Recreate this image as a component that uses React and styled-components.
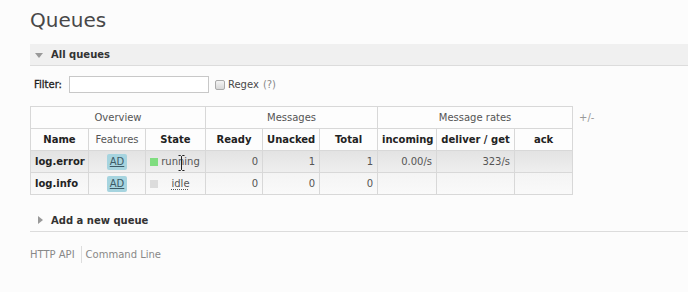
import React from 'react'
import styled, { createGlobalStyle } from 'styled-components'

const GlobalStyle = createGlobalStyle`
  body {
    margin: 0;
    background: #fcfcfc;
    font-family: "DejaVu Sans", Verdana, sans-serif;
    font-size: 10px;
    color: #484848;
  }
`

const queues = [
  { name: 'log.error', state: 'running', ready: 0, unacked: 1, total: 1, incoming: '0.00/s', deliver: '323/s', ack: '', alt: true },
  { name: 'log.info', state: 'idle', ready: 0, unacked: 0, total: 0, incoming: '', deliver: '', ack: '', alt: false },
]

const widths = [58, 57, 60, 57, 57, 58, 59, 78, 58]

const App = () => (
  <>
    <GlobalStyle />
    <Page>
      <Title>Queues</Title>
      <SectionHeader open>
        <Arrow open />
        All queues
      </SectionHeader>
      <FilterRow>
        <Label>Filter:</Label>
        <FilterInput />
        <Check />
        <span>Regex</span>
        <Help>(?)</Help>
      </FilterRow>
      <TableRow>
        <Table>
          <colgroup>
            {widths.map((w, i) => (
              <col key={i} style={{ width: w }} />
            ))}
          </colgroup>
          <thead>
            <tr>
              <GroupTh colSpan={3}>Overview</GroupTh>
              <GroupTh colSpan={3}>Messages</GroupTh>
              <GroupTh colSpan={3}>Message rates</GroupTh>
            </tr>
            <tr>
              <Th>Name</Th>
              <Th light>Features</Th>
              <Th>State</Th>
              <Th>Ready</Th>
              <Th>Unacked</Th>
              <Th>Total</Th>
              <Th>incoming</Th>
              <Th>deliver / get</Th>
              <Th>ack</Th>
            </tr>
          </thead>
          <tbody>
            {queues.map((q) => (
              <Row key={q.name} alt={q.alt}>
                <NameCell>{q.name}</NameCell>
                <CenterCell>
                  <Badge>AD</Badge>
                </CenterCell>
                <StateCell>
                  <StateBox>
                    <Square running={q.state === 'running'} />
                    <StateText underline={q.state === 'idle'}>{q.state}</StateText>
                  </StateBox>
                  {q.state === 'running' && (
                    <Cursor width="7" height="16" viewBox="0 0 7 16">
                      <path d="M0.5 0.5h2l1 1 1-1h2M3.5 1.5v13M0.5 15.5h2l1-1 1 1h2" fill="none" stroke="#222" strokeWidth="1" />
                    </Cursor>
                  )}
                </StateCell>
                <NumCell>{q.ready}</NumCell>
                <NumCell>{q.unacked}</NumCell>
                <NumCell>{q.total}</NumCell>
                <NumCell>{q.incoming}</NumCell>
                <NumCell>{q.deliver}</NumCell>
                <NumCell>{q.ack}</NumCell>
              </Row>
            ))}
          </tbody>
        </Table>
        <Toggle>+/-</Toggle>
      </TableRow>
      <SectionHeader>
        <Arrow />
        Add a new queue
      </SectionHeader>
      <Footer>
        <FooterLink>HTTP API</FooterLink>
        <FooterLink sep>Command Line</FooterLink>
      </Footer>
    </Page>
  </>
)

export default App

const Page = styled.div`
  padding: 8px 0 0 30px;
`

const Title = styled.h1`
  margin: 0;
  font-size: 20px;
  line-height: 24px;
  font-weight: normal;
  color: #484848;
`

const SectionHeader = styled.div`
  display: flex;
  align-items: center;
  height: 21px;
  margin-top: ${(p) => (p.open ? '12px' : '15px')};
  padding-left: 21px;
  position: relative;
  background: ${(p) => (p.open ? '#f0f0f0' : 'transparent')};
  border-bottom: 1px solid #dcdcdc;
  font-weight: bold;
  color: #333;
`

const Arrow = styled.span`
  position: absolute;
  left: ${(p) => (p.open ? '5px' : '8px')};
  top: ${(p) => (p.open ? '9px' : '6px')};
  width: 0;
  height: 0;
  border-style: solid;
  border-color: transparent;
  ${(p) =>
    p.open
      ? 'border-width: 5px 4px 0 4px; border-top-color: #999;'
      : 'border-width: 4px 0 4px 5px; border-left-color: #999;'}
`

const FilterRow = styled.div`
  display: flex;
  align-items: center;
  height: 17px;
  margin-top: 10px;
  padding-left: 4px;
  color: #484848;
`

const Label = styled.span`
  color: #222;
  -webkit-text-stroke: 0.3px #222;
  margin-right: 7px;
`

const FilterInput = styled.div`
  width: 138px;
  height: 15px;
  background: #fff;
  border: 1px solid #c8c8c8;
  margin-right: 6px;
`

const Check = styled.span`
  width: 8px;
  height: 8px;
  border: 1px solid #aaa;
  border-radius: 2px;
  background: linear-gradient(#f4f4f4, #d8d8d8);
  margin-right: 3px;
`

const Help = styled.span`
  color: #888;
  margin-left: 4px;
`

const TableRow = styled.div`
  display: flex;
  align-items: flex-start;
  margin-top: 13px;
`

const Table = styled.table`
  border-collapse: collapse;
  table-layout: fixed;
  width: 542px;
  background: #fdfdfd;
  td,
  th {
    border: 1px solid #d8d8d8;
    height: 21px;
    padding: 0 4px;
    vertical-align: middle;
  }
`

const GroupTh = styled.th`
  font-weight: normal;
  color: #555;
  text-align: center;
`

const Th = styled.th`
  font-weight: ${(p) => (p.light ? 'normal' : 'bold')};
  color: ${(p) => (p.light ? '#555' : '#222')};
  text-align: center;
`

const Row = styled.tr`
  background: ${(p) =>
    p.alt ? 'linear-gradient(#e3e3e3, #efefef)' : 'linear-gradient(#f4f4f4, #fafafa)'};
`

const NameCell = styled.td`
  font-weight: bold;
  color: #222;
  text-align: left;
`

const CenterCell = styled.td`
  text-align: center;
`

const Badge = styled.span`
  display: inline-block;
  padding: 1px 3px 2px;
  background: #a6d4df;
  color: #3c5a66;
  border-radius: 2px;
  line-height: 13px;
  text-decoration: underline;
`

const StateCell = styled.td`
  position: relative;
`

const StateBox = styled.div`
  display: flex;
  align-items: center;
  gap: 2px;
`

const Square = styled.span`
  width: 8px;
  height: 8px;
  flex-shrink: 0;
  background: ${(p) => (p.running ? '#80dd80' : '#dcdcdc')};
`

const StateText = styled.span`
  flex: 1;
  text-align: center;
  color: #555;
  ${(p) => p.underline && 'text-decoration: underline dotted; text-underline-offset: 2px;'}
`

const Cursor = styled.svg`
  position: absolute;
  left: 32px;
  top: 4px;
`

const NumCell = styled.td`
  text-align: right;
  color: #555;
  && {
    padding-right: 4px;
  }
`

const Toggle = styled.span`
  margin: 6px 0 0 6px;
  color: #999;
`

const Footer = styled.div`
  display: flex;
  align-items: center;
  height: 17px;
  margin-top: 14px;
  color: #888;
`

const FooterLink = styled.span`
  display: flex;
  align-items: center;
  height: 17px;
  ${(p) => p.sep && 'border-left: 1px solid #ddd; padding-left: 4px; margin-left: 6px;'}
`
